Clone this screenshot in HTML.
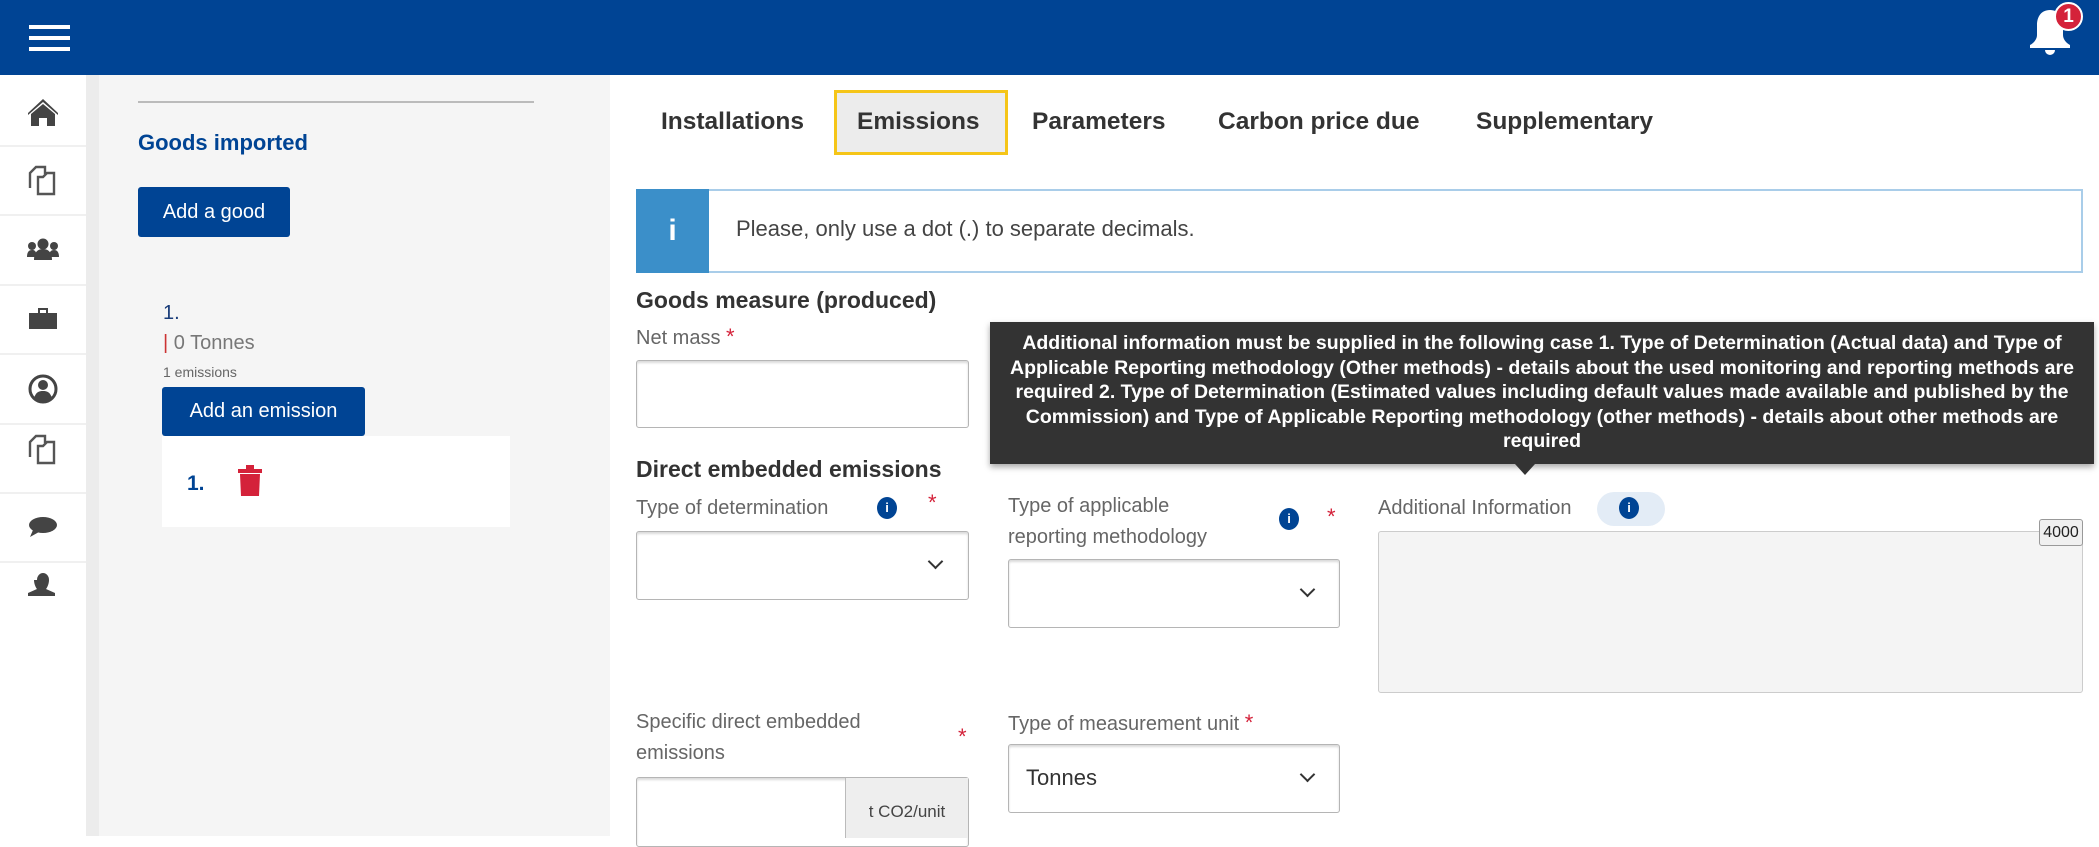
<!DOCTYPE html>
<html><head><meta charset="utf-8"><style>
*{box-sizing:border-box;margin:0;padding:0}
body{width:2099px;height:836px;overflow:hidden;background:#fff;font-family:"Liberation Sans",Arial,sans-serif;position:relative}
.a{position:absolute}
.hdr{left:0;top:0;width:2099px;height:75px;background:#004494}
.side{left:0;top:75px;width:86px;height:761px;background:#fff}
.sep{left:0;width:86px;height:2px;background:#f0f0f0}
.strip{left:86px;top:75px;width:13px;height:761px;background:#ececec}
.panel{left:99px;top:75px;width:511px;height:761px;background:#f5f5f5}
.btn{background:#004494;color:#fff;font-size:20px;border-radius:3px;display:flex;align-items:center;justify-content:center}
.tab{top:108px;font-size:24.5px;font-weight:bold;color:#333}
.lbl{font-size:20px;color:#666;line-height:31px}
.star{color:#d4223a;font-size:22px}
.inp{border:1px solid #b5b5b5;border-radius:3px;background:#fff;box-shadow:inset 0 2px 2px rgba(0,0,0,.15)}
.h{font-size:23px;font-weight:bold;color:#333}
.info{width:20px;height:22px;border-radius:50%;background:#004494;color:#fff;font-size:13px;font-weight:bold;text-align:center;line-height:22px}
.chev{width:11px;height:11px;border-right:2px solid #333;border-bottom:2px solid #333;transform:rotate(45deg)}
</style></head><body>
<div class="a hdr"></div>
<div class="a" style="left:29px;top:25px;width:41px;height:4px;background:#fff"></div>
<div class="a" style="left:29px;top:36px;width:41px;height:4px;background:#fff"></div>
<div class="a" style="left:29px;top:47px;width:41px;height:4px;background:#fff"></div>
<svg class="a" style="left:2026px;top:4px" width="50" height="54" viewBox="0 0 50 54"><path d="M24 6c-9 0-13 7-13 15v10c0 4-3 8-7 10v3h40v-3c-4-2-7-6-7-10V21c0-8-4-15-13-15z" fill="#fff"/><path d="M19 46a5 5 0 0 0 10 0z" fill="#fff"/></svg>
<div class="a" style="left:2054px;top:2px;width:29px;height:29px;border-radius:50%;background:#d4223a;border:2px solid #fff;color:#fff;font-weight:bold;font-size:19px;text-align:center;line-height:25px">1</div>

<div class="a side"></div>
<div class="a sep" style="top:145px"></div><div class="a sep" style="top:214px"></div><div class="a sep" style="top:284px"></div><div class="a sep" style="top:353px"></div><div class="a sep" style="top:423px"></div><div class="a sep" style="top:492px"></div><div class="a sep" style="top:561px"></div>
<svg class="a" style="left:0;top:75px" width="86" height="560" viewBox="0 75 86 560" fill="#444">
<path d="M28 113l15-14 15 14v2l-15-13-15 13zM31 114l12-10 12 10v12h-8v-8h-8v8h-8z"/>
<g fill="none" stroke="#555" stroke-width="2.4"><path d="M30 188v-15l6-6h9v7M38 177h5l4-4h7v21H38z"/><path d="M30 457v-15l6-6h9v7M38 446h5l4-4h7v21H38z"/></g>
<circle cx="43" cy="244" r="5.5"/><circle cx="32" cy="246" r="4"/><circle cx="54" cy="246" r="4"/><path d="M34 260c0-8 4-11 9-11s9 3 9 11zM27 257c0-5 2-7 5-7s4 1 5 7zM49 257c0-5 2-7 5-7s5 2 5 7z"/>
<path d="M38 313v-5h10v5h-2v-3h-6v3zM29 313h28v16H29z"/>
<circle cx="43" cy="389" r="13" fill="none" stroke="#444" stroke-width="3"/><circle cx="43" cy="385" r="5"/><path d="M34 398c2-6 5-7 9-7s7 1 9 7c-3 2-6 3-9 3s-6-1-9-3z"/>
<ellipse cx="43" cy="525" rx="14" ry="8"/><path d="M33 530l-3 7 9-5z"/>
<path d="M37 580a6 7 0 0 1 12 0c0 4-2 8-3 9l9 4v3H28v-3l9-4c-1-1-3-5-3-9z"/>
</svg>
<div class="a strip"></div>
<div class="a panel"></div>
<div class="a" style="left:138px;top:101px;width:396px;height:2px;background:#bbb"></div>
<div class="a" style="left:138px;top:130px;font-size:22px;font-weight:bold;color:#004494">Goods imported</div>
<div class="a btn" style="left:138px;top:187px;width:152px;height:50px">Add a good</div>
<div class="a" style="left:163px;top:302px;font-size:20px;color:#1a3d7a">1.</div>
<div class="a" style="left:163px;top:332px;font-size:20px;color:#777"><span style="color:#c33">|</span> 0 Tonnes</div>
<div class="a" style="left:163px;top:364px;font-size:14px;color:#666">1 emissions</div>
<div class="a btn" style="left:162px;top:387px;width:203px;height:49px">Add an emission</div>
<div class="a" style="left:162px;top:436px;width:348px;height:91px;background:#fff"></div>
<div class="a" style="left:187px;top:472px;font-size:21px;font-weight:bold;color:#004494">1.</div>
<svg class="a" style="left:238px;top:465px" width="24" height="31" viewBox="0 0 24 31" fill="#d4223a"><path d="M0 4h24v4H0zM8 0h8v4H8zM2 9h20l-1 22H3z"/></svg>

<div class="a tab" style="left:661px">Installations</div>
<div class="a" style="left:834px;top:90px;width:174px;height:65px;background:#ececec;border:3px solid #f5c518"></div>
<div class="a tab" style="left:857px">Emissions</div>
<div class="a tab" style="left:1032px">Parameters</div>
<div class="a tab" style="left:1218px">Carbon price due</div>
<div class="a tab" style="left:1476px">Supplementary</div>

<div class="a" style="left:636px;top:189px;width:1447px;height:84px;border:2px solid #a9cde9;background:#fff"></div>
<div class="a" style="left:636px;top:189px;width:73px;height:84px;background:#3b8fc9;color:#fff;font-weight:bold;font-size:30px;text-align:center;line-height:84px">i</div>
<div class="a" style="left:736px;top:216px;font-size:22px;color:#444">Please, only use a dot (.) to separate decimals.</div>

<div class="a h" style="left:636px;top:287px">Goods measure (produced)</div>
<div class="a lbl" style="left:636px;top:321px">Net mass <span class="star">*</span></div>
<div class="a inp" style="left:636px;top:360px;width:333px;height:68px"></div>
<div class="a lbl" style="left:1008px;top:321px;color:#888">Type of measurement unit <span class="star">*</span></div>
<div class="a inp" style="left:1008px;top:360px;width:332px;height:68px"></div>

<div class="a h" style="left:636px;top:456px">Direct embedded emissions</div>
<div class="a lbl" style="left:636px;top:493px">Type of determination</div>
<div class="a info" style="left:877px;top:497px">i</div>
<div class="a star" style="left:928px;top:490px">*</div>
<div class="a inp" style="left:636px;top:531px;width:333px;height:69px"></div>
<div class="a chev" style="left:930px;top:556px"></div>

<div class="a lbl" style="left:1008px;top:491px">Type of applicable<br>reporting methodology</div>
<div class="a info" style="left:1279px;top:508px">i</div>
<div class="a star" style="left:1327px;top:504px">*</div>
<div class="a inp" style="left:1008px;top:559px;width:332px;height:69px"></div>
<div class="a chev" style="left:1302px;top:584px"></div>

<div class="a lbl" style="left:1378px;top:493px">Additional Information</div>
<div class="a" style="left:1597px;top:492px;width:68px;height:34px;border-radius:17px;background:#e3ecf6"></div>
<div class="a info" style="left:1619px;top:497px">i</div>
<div class="a" style="left:1378px;top:531px;width:705px;height:162px;background:#f4f4f4;border:1px solid #ccc;border-radius:3px"></div>
<div class="a" style="left:2039px;top:519px;width:44px;height:27px;background:#f0f0f0;border:1px solid #999;border-radius:3px;font-size:16px;text-align:center;line-height:25px;color:#222">4000</div>

<div class="a lbl" style="left:636px;top:707px">Specific direct embedded<br>emissions</div>
<div class="a star" style="left:958px;top:724px">*</div>
<div class="a inp" style="left:636px;top:777px;width:333px;height:70px"></div>
<div class="a" style="left:845px;top:778px;width:123px;height:60px;background:#eee;border-left:1px solid #bbb;font-size:17px;color:#444;text-align:center;line-height:68px">t CO2/unit</div>

<div class="a lbl" style="left:1008px;top:707px">Type of measurement unit <span class="star">*</span></div>
<div class="a inp" style="left:1008px;top:744px;width:332px;height:69px"></div>
<div class="a" style="left:1026px;top:765px;font-size:22px;color:#333">Tonnes</div>
<div class="a chev" style="left:1302px;top:769px"></div>

<div class="a" style="left:990px;top:322px;width:1104px;height:142px;background:#333;box-shadow:0 3px 6px rgba(0,0,0,.35);color:#fff;font-weight:bold;font-size:19.5px;line-height:24.5px;text-align:center;padding:9px 6px 0">Additional information must be supplied in the following case 1. Type of Determination (Actual data) and Type of Applicable Reporting methodology (Other methods) - details about the used monitoring and reporting methods are required 2. Type of Determination (Estimated values including default values made available and published by the Commission) and Type of Applicable Reporting methodology (other methods) - details about other methods are required</div>
<div class="a" style="left:1515px;top:464px;width:0;height:0;border-left:10px solid transparent;border-right:10px solid transparent;border-top:11px solid #333"></div>
</body></html>
